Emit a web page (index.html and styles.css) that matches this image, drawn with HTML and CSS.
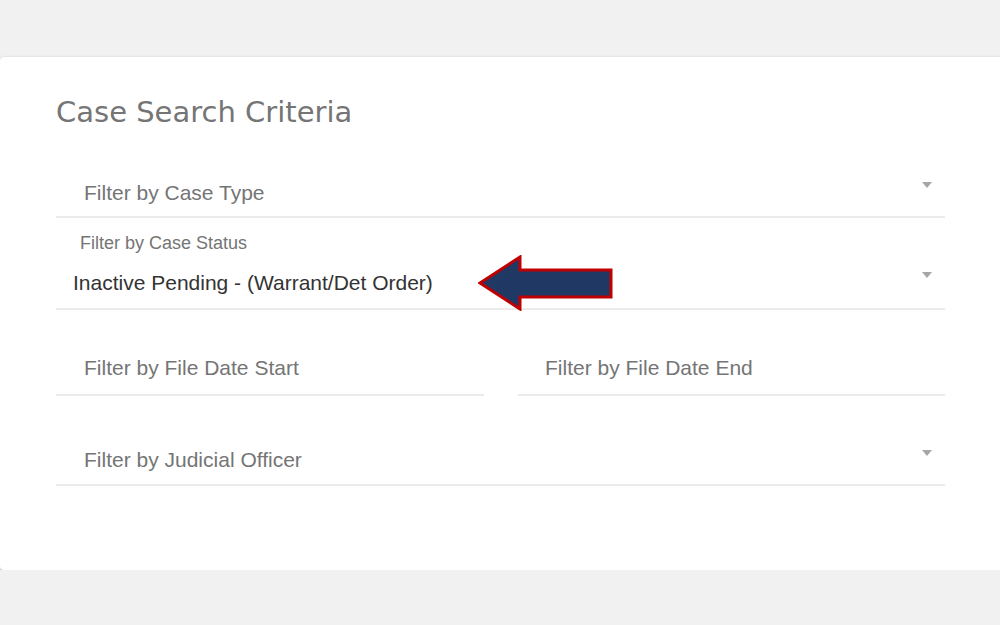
FILE: index.html
```html
<!DOCTYPE html>
<html lang="en">
<head>
<meta charset="utf-8">
<title>Case Search Criteria</title>
<link rel="stylesheet" href="styles.css">
</head>
<body>
<main class="card">
  <h1 class="title">Case Search Criteria</h1>

  <div class="field field-type">
    <span class="placeholder">Filter by Case Type</span>
    <span class="caret"></span>
  </div>

  <div class="field field-status">
    <div class="status-text">
      <span class="float-label">Filter by Case Status</span>
      <span class="value">Inactive Pending - (Warrant/Det Order)</span>
    </div>
    <span class="caret"></span>
    <svg class="arrow" width="136" height="56" viewBox="0 0 136 56" aria-hidden="true">
      <polygon points="2,28 42,2 42,15 133,15 133,42 42,42 42,54" fill="#203864" stroke="#c00000" stroke-width="3" stroke-linejoin="miter"/>
    </svg>
  </div>

  <div class="date-row">
    <div class="field field-date"><span class="placeholder">Filter by File Date Start</span></div>
    <div class="field field-date"><span class="placeholder">Filter by File Date End</span></div>
  </div>

  <div class="field field-officer">
    <span class="placeholder">Filter by Judicial Officer</span>
    <span class="caret"></span>
  </div>
</main>
</body>
</html>
```

FILE: styles.css
```css
* { box-sizing: border-box; }

html, body {
  margin: 0;
  padding: 0;
  background: #f1f1f1;
  overflow: hidden;
}

body {
  padding-top: 57px;
  font-family: "Liberation Sans", Arial, sans-serif;
}

.card {
  background: #fff;
  margin-right: -20px;
  height: 513px;
  padding: 35px 75px 0 56px;
  border-radius: 4px 0 0 4px;
  box-shadow: 0 2px 4px rgba(0, 0, 0, 0.2), 0 0 2px rgba(0, 0, 0, 0.08);
}

.title {
  margin: 0;
  height: 40px;
  line-height: 40px;
  font-family: "DejaVu Sans", Verdana, sans-serif;
  font-weight: normal;
  font-size: 29px;
  color: #757575;
}

.field {
  position: relative;
  display: flex;
  align-items: flex-end;
  justify-content: space-between;
  border-bottom: 2px solid #ebebeb;
}

.placeholder {
  font-size: 21px;
  line-height: 24px;
  color: #757575;
}

.caret {
  width: 0;
  height: 0;
  border-left: 5px solid transparent;
  border-right: 5px solid transparent;
  border-top: 6px solid #a6a6a6;
  margin-right: 13px;
}

.field-type {
  height: 86px;
  padding: 0 0 11px 28px;
}
.field-type .caret { margin-bottom: 17px; }

.field-status {
  height: 92px;
  padding: 0 0 13px 17px;
}
.field-status .caret { margin-bottom: 17px; }

.status-text {
  display: flex;
  flex-direction: column;
}

.float-label {
  font-size: 18px;
  line-height: 20px;
  color: #757575;
  margin-left: 7px;
  margin-bottom: 18px;
}

.value {
  font-size: 21px;
  line-height: 24px;
  color: #333;
}

.arrow {
  position: absolute;
  left: 422px;
  top: 37px;
}

.date-row {
  display: flex;
  gap: 34px;
}

.field-date {
  flex: 1;
  height: 86px;
  padding: 0 0 14px 28px;
}
.field-date + .field-date { padding-left: 27px; }

.field-officer {
  height: 90px;
  padding: 0 0 12px 28px;
}
.field-officer .caret { margin-bottom: 16px; }
```
